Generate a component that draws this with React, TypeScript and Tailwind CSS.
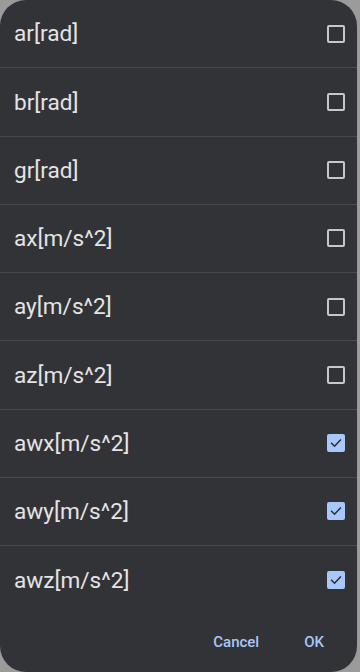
import React from "react";

const rows: { label: string; checked: boolean }[] = [
  { label: "ar[rad]", checked: false },
  { label: "br[rad]", checked: false },
  { label: "gr[rad]", checked: false },
  { label: "ax[m/s^2]", checked: false },
  { label: "ay[m/s^2]", checked: false },
  { label: "az[m/s^2]", checked: false },
  { label: "awx[m/s^2]", checked: true },
  { label: "awy[m/s^2]", checked: true },
  { label: "awz[m/s^2]", checked: true },
];

function Box({ checked }: { checked: boolean }) {
  if (checked) {
    return (
      <div className="w-[18px] h-[18px] rounded-[2px] bg-[#a8c7fa] flex items-center justify-center">
        <svg width="14" height="14" viewBox="0 0 24 24" fill="none">
          <path d="M4.5 12.5l5 5 10-10.5" stroke="#2b2d31" strokeWidth="2.6" strokeLinecap="square" />
        </svg>
      </div>
    );
  }
  return <div className="w-[18px] h-[18px] rounded-[2px] border-2 border-[#c7c7cb]" />;
}

export default function App() {
  return (
    <div className="w-[360px] h-[672px] bg-[#9b9b9b] overflow-hidden" style={{ fontFamily: "Roboto, 'Liberation Sans', sans-serif" }}>
      <div className="w-[357px] h-[672px] bg-[#323337] rounded-[26px] flex flex-col">
        {rows.map((r, i) => (
          <div
            key={r.label}
            className={`h-[68.25px] shrink-0 flex items-center justify-between pl-[14px] pr-[12px] ${i < rows.length - 1 ? "border-b border-[#48494d]" : ""}`}
          >
            <span className="text-[22.6px] text-[#e4e4e6] leading-none pt-[2px]">{r.label}</span>
            <Box checked={r.checked} />
          </div>
        ))}
        <div className="flex-1 flex items-center justify-end gap-[45px] pr-[33px] pb-[2px]">
          <span className="text-[15px] font-medium text-[#a8c7fa]">Cancel</span>
          <span className="text-[15px] font-medium text-[#a8c7fa]">OK</span>
        </div>
      </div>
    </div>
  );
}
